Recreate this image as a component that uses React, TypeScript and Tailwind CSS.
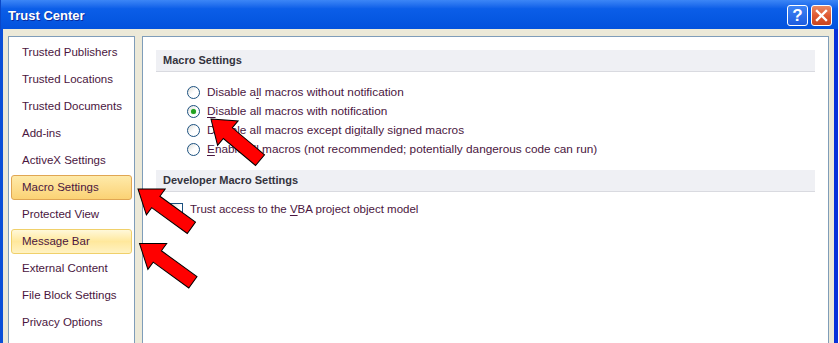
import React from 'react';

const navItems = [
  'Trusted Publishers',
  'Trusted Locations',
  'Trusted Documents',
  'Add-ins',
  'ActiveX Settings',
  'Macro Settings',
  'Protected View',
  'Message Bar',
  'External Content',
  'File Block Settings',
  'Privacy Options',
];

const radios: { key: string; label: React.ReactNode; checked?: boolean }[] = [
  {
    key: 'none',
    label: (
      <>
        Disable a<span className="underline underline-offset-2">l</span>l macros without notification
      </>
    ),
  },
  {
    key: 'notify',
    checked: true,
    label: (
      <>
        <span className="underline underline-offset-2">D</span>isable all macros with notification
      </>
    ),
  },
  {
    key: 'signed',
    label: (
      <>
        Disable all macros except di<span className="underline underline-offset-2">g</span>itally signed macros
      </>
    ),
  },
  {
    key: 'all',
    label: (
      <>
        <span className="underline underline-offset-2">E</span>nable all macros (not recommended; potentially dangerous code can run)
      </>
    ),
  },
];

// tip x, tip y, rotation (tip -> tail), shaft length
const arrows = [
  { x: 211, y: 119, r: 40, len: 64 },
  { x: 138, y: 189, r: 36, len: 66 },
  { x: 139.5, y: 243.5, r: 36, len: 66 },
];

function SectionBar({ title }: { title: string }) {
  return (
    <div className="h-[22px] flex items-center pl-[7px] bg-[#eff0f4] border-b border-[#d9dae0] text-[11px] font-bold text-[#33333d]">
      {title}
    </div>
  );
}

function Radio({ checked }: { checked?: boolean }) {
  return (
    <span className="w-[13px] h-[13px] rounded-full border border-[#1c5180] bg-linear-to-br from-[#dcdcd6] via-white to-white flex items-center justify-center shrink-0">
      {checked && <span className="w-[5px] h-[5px] rounded-full bg-[#21a121] shadow-[0_0_1px_#6ad26a]" />}
    </span>
  );
}

export default function App() {
  return (
    <div className="w-[839px] h-[343px] overflow-hidden bg-white relative font-['Liberation_Sans',Arial,sans-serif]">
      <div className="w-[838px] h-[380px] flex flex-col">
        {/* Title bar */}
        <div className="h-[29px] flex items-center justify-between pl-[7px] pr-[6px] bg-linear-to-b from-[#3c86f6] via-[#0b5ee8] via-30% to-[#0352dd] border-l-[1px] border-[#0a47c8]">
          <span className="text-white font-bold text-[13px] pt-[2px] [text-shadow:1px_1px_#0a2a9c]">Trust Center</span>
          <div className="flex gap-[3px] pt-[1px]">
            <div className="w-[21px] h-[21px] rounded-[3px] border border-white bg-linear-to-b from-[#3f84f4] to-[#1d5ce0] flex items-center justify-center text-white font-bold text-[17px] leading-none">
              ?
            </div>
            <div className="w-[21px] h-[21px] rounded-[3px] border border-white bg-linear-to-b from-[#e98a64] via-[#e05a33] to-[#c9451f] flex items-center justify-center">
              <svg width="13" height="13" viewBox="0 0 13 13">
                <path d="M2 2 L11 11 M11 2 L2 11" stroke="white" strokeWidth="2.4" strokeLinecap="square" />
              </svg>
            </div>
          </div>
        </div>

        {/* Client area */}
        <div className="flex-1 flex border-l-[3px] border-l-[#0a4fd8] border-r-[4px] border-r-[#0831d9] bg-[#ece9d8] pt-[7px] pl-[5px] pr-[5px]">
          {/* Left nav */}
          <div className="w-[127px] border border-[#7f9db9] bg-white pt-[2px] px-[2px]">
            {navItems.map((item) => {
              const selected = item === 'Macro Settings';
              const hover = item === 'Message Bar';
              return (
                <div key={item} className="h-[27px] py-[1px]">
                  <div
                    className={`h-[25px] flex items-center pl-[10px] rounded-[3px] border text-[11.5px] text-[#4a1640] ${
                      selected
                        ? 'bg-linear-to-b from-[#feeaa9] to-[#fbd274] border-[#e0a653]'
                        : hover
                        ? 'bg-linear-to-b from-[#fff8d9] via-[#ffe89c] to-[#fff2c2] border-[#f0d06a]'
                        : 'border-transparent'
                    }`}
                  >
                    {item}
                  </div>
                </div>
              );
            })}
          </div>

          {/* Right content */}
          <div className="flex-1 ml-[7px] border border-[#7f9db9] bg-white pt-[13px] px-[13px]">
            <SectionBar title="Macro Settings" />
            <div className="pt-[11px] pl-[31px]">
              {radios.map((r) => (
                <div key={r.key} className="h-[19px] flex items-center gap-[7px] text-[11.8px] text-[#4a1640]">
                  <Radio checked={r.checked} />
                  <span>{r.label}</span>
                </div>
              ))}
            </div>
            <div className="mt-[11px]">
              <SectionBar title="Developer Macro Settings" />
            </div>
            <div className="pt-[8px] pl-[14px] h-[19px] flex items-center gap-[7px] text-[11.5px] text-[#4a1640] box-content">
              <span className="w-[13px] h-[13px] border border-[#1c5180] bg-linear-to-br from-[#dcdcd6] via-white to-white shrink-0" />
              <span>
                Trust access to the <span className="underline underline-offset-2">V</span>BA project object model
              </span>
            </div>
          </div>
        </div>
      </div>

      {/* Red annotation arrows */}
      <svg className="absolute inset-0 pointer-events-none" width="839" height="343">
        {arrows.map((a, i) => (
          <polygon
            key={i}
            points={`0,0 22,-16 22,-7 ${a.len},-7 ${a.len},7 22,7 22,16`}
            transform={`translate(${a.x} ${a.y}) rotate(${a.r})`}
            fill="#ff0000"
            stroke="#000"
            strokeWidth="1"
            strokeLinejoin="miter"
          />
        ))}
      </svg>
    </div>
  );
}
